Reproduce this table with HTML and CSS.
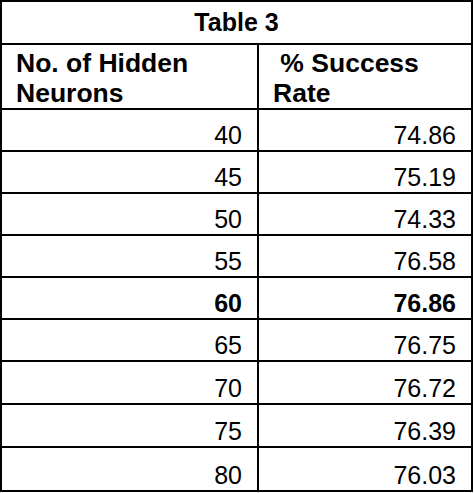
FILE: index.html
```html
<!DOCTYPE html>
<html>
<head>
<meta charset="utf-8">
<link rel="stylesheet" href="styles.css">
</head>
<body>
<table class="tbl">
  <colgroup><col class="c1"><col class="c2"></colgroup>
  <tr class="title-row"><th colspan="2" class="title">Table 3</th></tr>
  <tr class="head-row">
    <th class="head">No. of Hidden<br>Neurons</th>
    <th class="head">&nbsp;% Success<br>Rate</th>
  </tr>
  <tr class="row"><td>40</td><td>74.86</td></tr>
  <tr class="row"><td>45</td><td>75.19</td></tr>
  <tr class="row"><td>50</td><td>74.33</td></tr>
  <tr class="row"><td>55</td><td>76.58</td></tr>
  <tr class="row best"><td>60</td><td>76.86</td></tr>
  <tr class="row"><td>65</td><td>76.75</td></tr>
  <tr class="row r43"><td>70</td><td>76.72</td></tr>
  <tr class="row r43"><td>75</td><td>76.39</td></tr>
  <tr class="row r44"><td>80</td><td>76.03</td></tr>
</table>
</body>
</html>
```
FILE: styles.css
```css
html, body {
  margin: 0;
  padding: 0;
  background: #fff;
}
body {
  font-family: "Liberation Sans", Arial, sans-serif;
  color: #000;
}
.tbl {
  border-collapse: collapse;
  width: 471px;
  table-layout: fixed;
  border: 2px solid #000;
}
.c1 { width: 257px; }
.c2 { width: 214px; }
.tbl th, .tbl td {
  border: 2px solid #000;
  padding: 0;
}
.title-row { height: 43px; }
.tbl .title {
  font-size: 25px;
  font-weight: bold;
  text-align: center;
  vertical-align: middle;
  line-height: 28px;
  padding: 0 0 2px 0;
}
.head-row { height: 65px; }
.tbl .head {
  font-size: 26.5px;
  font-weight: bold;
  text-align: left;
  vertical-align: top;
  line-height: 30px;
  padding: 3px 0 0 14px;
}
.row { height: 42px; }
.row.r43 { height: 43px; }
.row.r44 { height: 44px; }
.tbl .row td {
  font-size: 25px;
  text-align: right;
  vertical-align: bottom;
  line-height: 26px;
  padding: 0 15px 2px 0;
}
.row.best td { font-weight: bold; }
```
